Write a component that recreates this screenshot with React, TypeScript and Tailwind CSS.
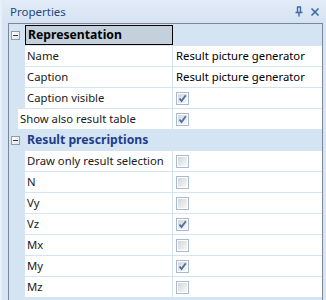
import React from "react";

const font = { fontFamily: '"Noto Sans", "Open Sans", sans-serif' };

function MinusBox() {
  return (
    <div className="w-[9px] h-[9px] border border-[#8d9bab] bg-gradient-to-br from-[#ffffff] to-[#dfe6ee] flex items-center justify-center">
      <div className="w-[5px] h-px bg-[#2d3a4a]" />
    </div>
  );
}

function Check({ checked }: { checked: boolean }) {
  return (
    <div className="w-[13px] h-[13px] border border-[#a9b9cf] bg-white p-px">
      <div className="w-full h-full bg-gradient-to-br from-[#d4d6d9] to-[#f8f8f8] flex items-center justify-center">
        {checked && (
          <svg width="9" height="9" viewBox="0 0 9 9">
            <path d="M1.5 4.5 L3.5 7 L7.8 1.2" fill="none" stroke="#4a6ea6" strokeWidth="1.8" />
          </svg>
        )}
      </div>
    </div>
  );
}

function Row({ name, value, check, wide }: { name: string; value?: string; check?: boolean; wide?: boolean }) {
  return (
    <div className="flex h-[20px] shrink-0">
      <div className={wide ? "w-[9px] shrink-0" : "w-[16px] shrink-0"} />
      <div className={(wide ? "w-[154px]" : "w-[147px]") + " shrink-0 bg-white flex items-center pl-[2px] text-[11.3px] text-[#1a1a1a] whitespace-nowrap overflow-hidden"}>
        {name}
      </div>
      <div className="w-px shrink-0" />
      <div className="flex-1 bg-white flex items-center pl-[3px] text-[11.3px] text-black whitespace-nowrap overflow-hidden">
        {check !== undefined ? <Check checked={check} /> : value}
      </div>
    </div>
  );
}

export default function App() {
  return (
    <div className="w-[326px] h-[300px] bg-[#d6e4f3] overflow-hidden relative" style={font}>
      <div className="absolute left-0 top-0 w-[2px] h-full bg-[#e8eff8]" />
      <div className="h-[23px] flex items-center pl-[10px] pr-[6px] bg-gradient-to-b from-[#e3ecf7] to-[#d5e3f2]">
        <span className="text-[11.5px] text-[#23487c]">Properties</span>
        <div className="flex-1" />
        <svg width="10" height="11" viewBox="0 0 10 11" className="mr-[6px]">
          <path d="M3 1 H7 M3.5 1 V6 M6.5 1 V6 M1.5 6.5 H8.5 M5 6.5 V10.5" fill="none" stroke="#3a6aa3" strokeWidth="1.4" />
        </svg>
        <svg width="10" height="10" viewBox="0 0 10 10">
          <path d="M1.5 1.5 L8.5 8.5 M8.5 1.5 L1.5 8.5" fill="none" stroke="#3a6aa3" strokeWidth="1.6" />
        </svg>
      </div>
      <div className="ml-[8px] w-[315px] border-l border-t border-r border-[#7b8798] bg-[#d5e4f2] flex flex-col gap-px pt-px h-[290px]">
        <div className="flex h-[20px] shrink-0">
          <div className="w-[16px] shrink-0 flex items-center pl-[2px]">
            <MinusBox />
          </div>
          <div className="w-[148px] shrink-0 border border-black bg-[#c4d1dd] flex items-center pl-[2px] text-[12.2px] font-bold text-black">
            Representation
          </div>
        </div>
        <Row name="Name" value="Result picture generator" />
        <Row name="Caption" value="Result picture generator" />
        <Row name="Caption visible" check={true} />
        <Row name="Show also result table" check={true} wide />
        <div className="flex h-[20px] shrink-0">
          <div className="w-[16px] shrink-0 flex items-center pl-[2px]">
            <MinusBox />
          </div>
          <div className="flex items-center pl-[2px] text-[12.2px] font-bold text-[#1f3d8a]">
            Result prescriptions
          </div>
        </div>
        <Row name="Draw only result selection" check={false} />
        <Row name="N" check={false} />
        <Row name="Vy" check={false} />
        <Row name="Vz" check={true} />
        <Row name="Mx" check={false} />
        <Row name="My" check={true} />
        <Row name="Mz" check={false} />
      </div>
    </div>
  );
}
